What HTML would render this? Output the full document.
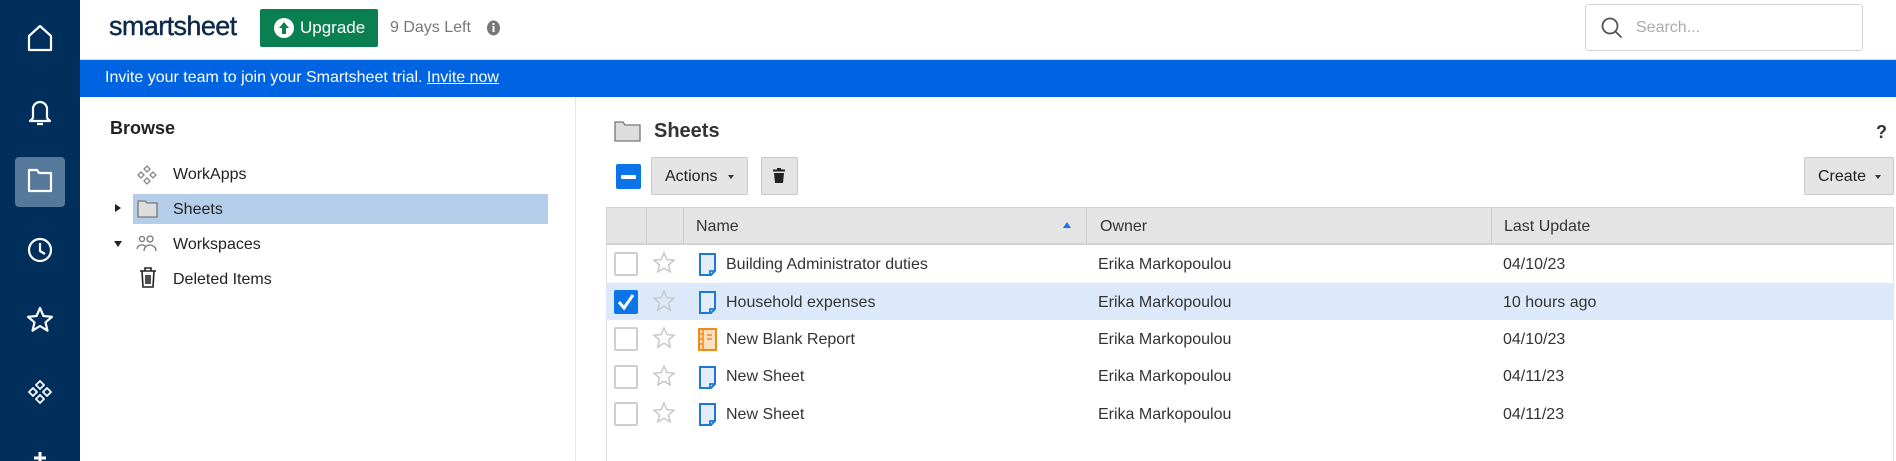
<!DOCTYPE html>
<html><head><meta charset="utf-8"><style>
*{box-sizing:border-box;margin:0;padding:0}
body{width:1896px;height:461px;overflow:hidden;background:#fff;font-family:"Liberation Sans",sans-serif;color:#222;position:relative}
.a{position:absolute}
.side{left:0;top:0;width:80px;height:461px;background:#002f5c}
.txt{white-space:nowrap}
.btn{background:#e4e4e4;border:1px solid #c9c9c9;border-radius:2px}
.cb{width:24px;height:24px;border:2px solid #cfcfcf;background:#fff;border-radius:2px}
.row{left:606px;width:1288px;height:38px}
.cell{font-size:16px;color:#333}
</style></head><body>
<div class="a side"></div>
<svg class="a" style="left:0;top:0" width="80" height="461" fill="none" stroke="#fff" stroke-width="2.2" stroke-linejoin="round">
<path d="M29 50V36l11-10 11 10v14z"/>
<path d="M33 118v-9a7 7 0 0 1 14 0v9l3 3H30z M37 124h6"/>
<rect x="15" y="157" width="50" height="50" rx="4" fill="#56789a" stroke="none"/>
<path d="M29 170h8l2 3h12v18H29z"/>
<circle cx="40" cy="250" r="11"/><path d="M40 243v8l5 3"/>
<path d="M40 308l3.5 8 8.5.8-6.5 5.6 2 8.3L40 326l-7.5 4.7 2-8.3-6.5-5.6 8.5-.8z"/>
<path d="M40 381l4 4-4 4-4-4z M33 388l4 4-4 4-4-4z M47 388l4 4-4 4-4-4z M40 395l4 4-4 4-4-4z" stroke-width="1.8"/>
<path d="M40 452v12 M34 458h12" stroke-width="3"/>
</svg>
<div class="a txt" style="left:109px;top:11px;font-size:27px;color:#0d2a4a;letter-spacing:-0.6px;-webkit-text-stroke:0.4px #0d2a4a">smartsheet</div>
<div class="a" style="left:260px;top:9px;width:118px;height:38px;background:#0a7f52;border-radius:2px"></div>
<svg class="a" style="left:273px;top:17px" width="22" height="22"><circle cx="11" cy="11" r="10" fill="#fff"/><path d="M11 5l-5 6h3v6h4v-6h3z" fill="#0a7f52"/></svg>
<div class="a txt" style="left:300px;top:18px;font-size:17px;color:#fff">Upgrade</div>
<div class="a txt" style="left:390px;top:19px;font-size:16px;color:#777">9 Days Left</div>
<svg class="a" style="left:486px;top:20px" width="15" height="16"><ellipse cx="7.5" cy="8" rx="6.5" ry="7.5" fill="#777"/><rect x="6.5" y="6" width="2" height="6" fill="#fff"/><rect x="6.5" y="3" width="2" height="2" fill="#fff"/></svg>
<div class="a" style="left:1585px;top:4px;width:278px;height:47px;border:1.5px solid #d6d6d6;border-radius:3px"></div>
<svg class="a" style="left:1600px;top:16px" width="24" height="24" fill="none" stroke="#555" stroke-width="1.8"><circle cx="10" cy="10" r="7.5"/><path d="M15.5 15.5l6 6"/></svg>
<div class="a txt" style="left:1636px;top:19px;font-size:16px;color:#aaa">Search...</div>
<div class="a" style="left:80px;top:59px;width:1816px;height:1px;background:#ddd"></div>
<div class="a" style="left:80px;top:60px;width:1816px;height:37px;background:#0063e1"></div>
<div class="a txt" style="left:105px;top:69px;font-size:16px;color:#fff">Invite your team to join your Smartsheet trial. <span style="text-decoration:underline">Invite now</span></div>
<div class="a" style="left:575px;top:97px;width:1px;height:364px;background:#e6e6e6"></div>
<div class="a txt" style="left:110px;top:118px;font-size:18px;font-weight:bold;color:#222">Browse</div>
<svg class="a" style="left:136px;top:164px" width="22" height="22" fill="none" stroke="#888" stroke-width="1.3"><path d="M11 2l3 3-3 3-3-3z M5 8l3 3-3 3-3-3z M17 8l3 3-3 3-3-3z M11 14l3 3-3 3-3-3z"/></svg>
<div class="a txt" style="left:173px;top:166px;font-size:16px">WorkApps</div>
<div class="a" style="left:133px;top:194px;width:415px;height:30px;background:#b4cde9"></div>
<div class="a" style="left:115px;top:204px;border-left:6px solid #222;border-top:4.5px solid transparent;border-bottom:4.5px solid transparent"></div>
<svg class="a" style="left:137px;top:199px" width="22" height="20"><path d="M1 2h7l2 2h10v14H1z" fill="#ddd" stroke="#777" stroke-width="1.3"/></svg>
<div class="a txt" style="left:173px;top:201px;font-size:16px">Sheets</div>
<div class="a" style="left:114px;top:241px;border-top:6px solid #222;border-left:4.5px solid transparent;border-right:4.5px solid transparent"></div>
<svg class="a" style="left:136px;top:235px" width="22" height="20" fill="none" stroke="#777" stroke-width="1.3"><circle cx="6" cy="4" r="2.5"/><circle cx="14" cy="4" r="3"/><path d="M1 14a5 5 0 0 1 9 -2 M8 16a6 6 0 0 1 12 0"/></svg>
<div class="a txt" style="left:173px;top:236px;font-size:16px">Workspaces</div>
<svg class="a" style="left:139px;top:267px" width="18" height="22" fill="none" stroke="#222" stroke-width="1.6"><path d="M1 4h16 M6 4V1h6v3 M3 4l1 16h10l1-16 M7 8v9 M9 8v9 M11 8v9"/></svg>
<div class="a txt" style="left:173px;top:271px;font-size:16px">Deleted Items</div>
<svg class="a" style="left:614px;top:120px" width="28" height="22"><path d="M1 2h8l2 3h15v16H1z" fill="#ddd" stroke="#777" stroke-width="1.3"/></svg>
<div class="a txt" style="left:654px;top:120px;font-size:20px;font-weight:bold;color:#333">Sheets</div>
<div class="a txt" style="left:1876px;top:122px;font-size:18px;font-weight:bold;color:#333">?</div>
<div class="a" style="left:616px;top:164px;width:25px;height:25px;background:#0b74e8;border-radius:2px"></div>
<div class="a" style="left:621px;top:175px;width:15px;height:4px;background:#fff;border-radius:1px"></div>
<div class="a btn" style="left:651px;top:157px;width:97px;height:38px"></div>
<div class="a txt" style="left:665px;top:168px;font-size:16px;color:#222">Actions</div>
<div class="a" style="left:728px;top:175px;border-top:4px solid #333;border-left:3px solid transparent;border-right:3px solid transparent"></div>
<div class="a btn" style="left:761px;top:157px;width:37px;height:38px"></div>
<svg class="a" style="left:773px;top:168px" width="12" height="15" fill="#222"><rect x="0" y="1.5" width="12" height="2"/><rect x="4" y="0" width="4" height="2"/><path d="M1 5h10l-1 10H2z"/></svg>
<div class="a btn" style="left:1804px;top:157px;width:90px;height:38px"></div>
<div class="a txt" style="left:1818px;top:168px;font-size:16px;color:#222">Create</div>
<div class="a" style="left:1875px;top:175px;border-top:4px solid #333;border-left:3px solid transparent;border-right:3px solid transparent"></div>
<div class="a" style="left:606px;top:207px;width:1288px;height:254px;border-left:1px solid #ddd;border-right:1px solid #ddd"></div>
<div class="a" style="left:606px;top:207px;width:1288px;height:38px;background:#e4e4e4;border:1px solid #d3d3d3;border-bottom:2px solid #d3d3d3"></div>
<div class="a" style="left:646px;top:207px;width:1px;height:37px;background:#ccc"></div>
<div class="a" style="left:683px;top:207px;width:1px;height:37px;background:#ccc"></div>
<div class="a" style="left:1086px;top:207px;width:1px;height:37px;background:#ccc"></div>
<div class="a" style="left:1491px;top:207px;width:1px;height:37px;background:#ccc"></div>
<div class="a txt" style="left:696px;top:218px;font-size:16px;color:#333">Name</div>
<div class="a" style="left:1063px;top:222px;border-bottom:6px solid #1a73e8;border-left:4.5px solid transparent;border-right:4.5px solid transparent"></div>
<div class="a txt" style="left:1100px;top:218px;font-size:16px;color:#333">Owner</div>
<div class="a txt" style="left:1504px;top:218px;font-size:16px;color:#333">Last Update</div>
<div class="a row" style="top:283px;height:37px;background:#dbe9fa"></div>
<svg class="a" style="left:0;top:0" width="1896" height="461">
<defs>
<path id="st" d="M11 1l2.9 6.6 7.1.6-5.4 4.7 1.6 7L11 16.2 4.8 19.9l1.6-7L1 8.2l7.1-.6z" fill="none" stroke="#c8c8c8" stroke-width="1.5"/>
<g id="doc"><path d="M1 1h15v17l-4 4H1z" fill="#e4ecfa" stroke="#1e78d6" stroke-width="2"/><path d="M11 22v-4h5" fill="none" stroke="#1e78d6" stroke-width="1.8"/></g>
</defs>
<g transform="translate(653,252)"><use href="#st"/></g>
<g transform="translate(653,290)"><use href="#st"/></g>
<g transform="translate(653,327)"><use href="#st"/></g>
<g transform="translate(653,365)"><use href="#st"/></g>
<g transform="translate(653,402)"><use href="#st"/></g>
<g transform="translate(699,253)"><use href="#doc"/></g>
<g transform="translate(699,291)"><use href="#doc"/></g>
<g transform="translate(699,366)"><use href="#doc"/></g>
<g transform="translate(699,403)"><use href="#doc"/></g>
<g transform="translate(698,328)"><rect x="1" y="1" width="17" height="21" fill="#fde0c0" stroke="#f08a1c" stroke-width="2"/><path d="M5 1v21 M9 7h5 M9 11h5 M2 6h3 M2 11h3 M2 16h3" stroke="#f08a1c" stroke-width="1.5"/></g>
</svg>
<div class="a cb" style="left:614px;top:252px"></div>
<div class="a" style="left:614px;top:290px;width:24px;height:24px;background:#0b74e8;border-radius:2px"></div>
<svg class="a" style="left:614px;top:290px" width="24" height="24"><path d="M5 12l5 6 9-13" fill="none" stroke="#fff" stroke-width="3"/></svg>
<div class="a cb" style="left:614px;top:327px"></div>
<div class="a cb" style="left:614px;top:365px"></div>
<div class="a cb" style="left:614px;top:402px"></div>
<div class="a txt cell" style="left:726px;top:256px">Building Administrator duties</div>
<div class="a txt cell" style="left:726px;top:294px">Household expenses</div>
<div class="a txt cell" style="left:726px;top:331px">New Blank Report</div>
<div class="a txt cell" style="left:726px;top:368px">New Sheet</div>
<div class="a txt cell" style="left:726px;top:406px">New Sheet</div>
<div class="a txt cell" style="left:1098px;top:256px">Erika Markopoulou</div>
<div class="a txt cell" style="left:1098px;top:294px">Erika Markopoulou</div>
<div class="a txt cell" style="left:1098px;top:331px">Erika Markopoulou</div>
<div class="a txt cell" style="left:1098px;top:368px">Erika Markopoulou</div>
<div class="a txt cell" style="left:1098px;top:406px">Erika Markopoulou</div>
<div class="a txt cell" style="left:1503px;top:256px">04/10/23</div>
<div class="a txt cell" style="left:1503px;top:294px">10 hours ago</div>
<div class="a txt cell" style="left:1503px;top:331px">04/10/23</div>
<div class="a txt cell" style="left:1503px;top:368px">04/11/23</div>
<div class="a txt cell" style="left:1503px;top:406px">04/11/23</div>
</body></html>
